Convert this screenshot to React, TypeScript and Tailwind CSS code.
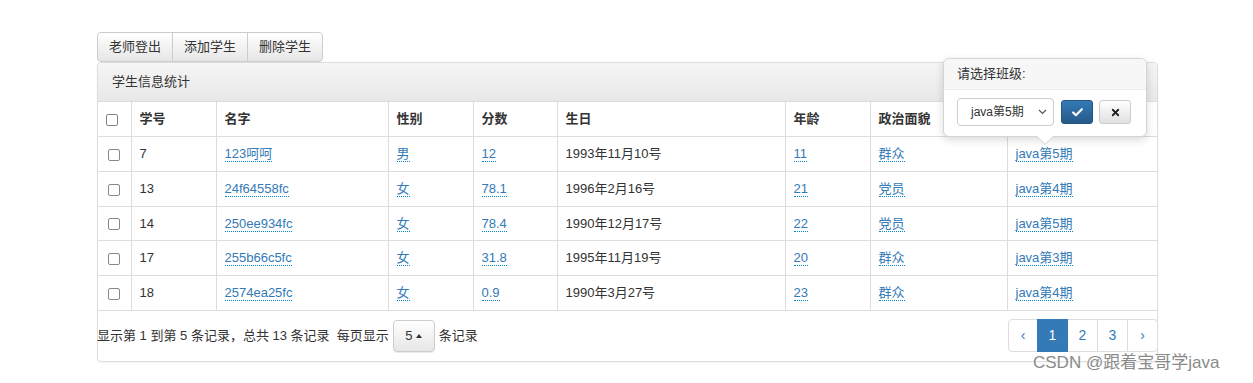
import { Check, X } from "lucide-react";

type Row = {
  id: string;
  name: string;
  sex: string;
  score: string;
  birth: string;
  age: string;
  party: string;
  cls: string;
};

const rows: Row[] = [
  { id: "7", name: "123呵呵", sex: "男", score: "12", birth: "1993年11月10号", age: "11", party: "群众", cls: "java第5期" },
  { id: "13", name: "24f64558fc", sex: "女", score: "78.1", birth: "1996年2月16号", age: "21", party: "党员", cls: "java第4期" },
  { id: "14", name: "250ee934fc", sex: "女", score: "78.4", birth: "1990年12月17号", age: "22", party: "党员", cls: "java第5期" },
  { id: "17", name: "255b66c5fc", sex: "女", score: "31.8", birth: "1995年11月19号", age: "20", party: "群众", cls: "java第3期" },
  { id: "18", name: "2574ea25fc", sex: "女", score: "0.9", birth: "1990年3月27号", age: "23", party: "群众", cls: "java第4期" },
];

const font = "font-['Liberation_Sans','Noto_Sans_CJK_SC',sans-serif]";

function Editable({ text }: { text: string }) {
  return (
    <span className="border-b border-dotted border-[#0088cc] text-[#337ab7]">{text}</span>
  );
}

function Box() {
  return <span className="inline-block h-[12px] w-[12px] rounded-[2px] border border-[#888] bg-white align-middle" />;
}

const th = "h-[34.7px] border border-[#ddd] px-2 text-left font-bold";
const td = "h-[34.7px] border border-[#ddd] px-2";

export default function App() {
  return (
    <div className={`${font} relative h-[383px] w-[1253px] bg-white text-[13px] text-[#333]`}>
      <div className="relative ml-[97px] w-[1061px] pt-[32px]">
        <div className="flex h-[30px] w-fit">
          {["老师登出", "添加学生", "删除学生"].map((b, i) => (
            <div
              key={b}
              className={`flex h-[30px] w-[76px] items-center justify-center border border-[#ccc] bg-gradient-to-b from-white to-[#e6e6e6] ${
                i === 0 ? "rounded-l-[4px]" : "-ml-px"
              } ${i === 2 ? "rounded-r-[4px]" : ""}`}
            >
              {b}
            </div>
          ))}
        </div>

        <div className="rounded-[4px] border border-[#ddd] shadow-[0_1px_2px_rgba(0,0,0,0.05)]">
          <div className="flex h-[39px] items-center rounded-t-[4px] border-b border-[#ddd] bg-gradient-to-b from-[#f5f5f5] to-[#e8e8e8] px-[14px]">
            学生信息统计
          </div>
          <table className="w-[1059px] table-fixed border-collapse">
            <colgroup>
              <col className="w-[33px]" />
              <col className="w-[85px]" />
              <col className="w-[172px]" />
              <col className="w-[85px]" />
              <col className="w-[84px]" />
              <col className="w-[228px]" />
              <col className="w-[85px]" />
              <col className="w-[137px]" />
              <col className="w-[150px]" />
            </colgroup>
            <thead>
              <tr>
                <th className={`${th} border-l-0 border-t-0 text-center`}>
                  <Box />
                </th>
                {["学号", "名字", "性别", "分数", "生日", "年龄", "政治面貌", ""].map((h, i) => (
                  <th key={i} className={`${th} border-t-0 ${i === 7 ? "border-r-0" : ""}`}>
                    {h}
                  </th>
                ))}
              </tr>
            </thead>
            <tbody>
              {rows.map((r) => (
                <tr key={r.id}>
                  <td className={`${td} border-l-0 text-center`}>
                    <Box />
                  </td>
                  <td className={td}>{r.id}</td>
                  <td className={td}>
                    <Editable text={r.name} />
                  </td>
                  <td className={td}>
                    <Editable text={r.sex} />
                  </td>
                  <td className={td}>
                    <Editable text={r.score} />
                  </td>
                  <td className={td}>{r.birth}</td>
                  <td className={td}>
                    <Editable text={r.age} />
                  </td>
                  <td className={td}>
                    <Editable text={r.party} />
                  </td>
                  <td className={`${td} border-r-0`}>
                    <Editable text={r.cls} />
                  </td>
                </tr>
              ))}
            </tbody>
          </table>
          <div className="-ml-px flex h-[50px] items-center justify-between pr-0">
            <div className="flex items-center">
              <span>显示第 1 到第 5 条记录，总共 13 条记录&nbsp;&nbsp;每页显示</span>
              <div className="ml-[4px] mr-[4px] flex h-[32px] w-[42px] items-center justify-center gap-[4px] rounded-[4px] border border-[#ccc] bg-gradient-to-b from-white to-[#e6e6e6] shadow-[0_1px_0_rgba(0,0,0,0.08)]">
                <span>5</span>
                <span className="h-0 w-0 border-x-[3px] border-b-[4px] border-x-transparent border-b-[#333]" />
              </div>
              <span>条记录</span>
            </div>
            <div className="-mr-px flex h-[33px] items-stretch">
              {["‹", "1", "2", "3", "›"].map((p, i) => (
                <div
                  key={p}
                  className={`flex items-center justify-center border text-[14px] ${
                    i === 0 ? "w-[30px] rounded-l-[4px]" : "-ml-px w-[31px]"
                  } ${i === 4 ? "rounded-r-[4px]" : ""} ${
                    i === 1 ? "z-10 border-[#337ab7] bg-[#337ab7] text-white" : "border-[#ddd] bg-white text-[#337ab7]"
                  }`}
                >
                  {p}
                </div>
              ))}
            </div>
          </div>
        </div>

        <div className="absolute left-[846px] top-[58px] z-20 w-[204px] rounded-[6px] border border-[#d4d4d4] bg-white shadow-[0_3px_8px_rgba(0,0,0,0.15)]">
          <div className="flex h-[31px] items-center rounded-t-[6px] border-b border-[#ebebeb] bg-[#f7f7f7] px-[13px] text-[13px]">
            请选择班级:
          </div>
          <div className="flex items-center gap-[7px] px-[13px] pb-[10px] pt-[8px]">
            <div className="flex h-[28px] w-[97px] items-center justify-between rounded-[4px] border border-[#ccc] bg-white pl-[13px] pr-[6px] text-[12px]">
              <span>java第5期</span>
              <svg width="9" height="6" viewBox="0 0 9 6" fill="none" stroke="#555" strokeWidth="1.2">
                <path d="M1 1l3.5 3.5L8 1" />
              </svg>
            </div>
            <div className="flex h-[24px] w-[32px] items-center justify-center rounded-[3px] border border-[#245580] bg-gradient-to-b from-[#337ab7] to-[#265a88]">
              <Check size={13} strokeWidth={4} color="white" />
            </div>
            <div className="ml-[-1px] flex h-[24px] w-[32px] items-center justify-center rounded-[3px] border border-[#ccc] bg-gradient-to-b from-white to-[#e0e0e0]">
              <X size={11} strokeWidth={4} color="#222" />
            </div>
          </div>
          <div className="absolute bottom-[-9px] left-[92px] h-0 w-0 border-x-[9px] border-t-[9px] border-x-transparent border-t-[#cfcfcf]" />
          <div className="absolute bottom-[-8px] left-[93px] h-0 w-0 border-x-[8px] border-t-[8px] border-x-transparent border-t-white" />
        </div>
      </div>

      <div className="absolute left-[1033px] top-[350px] text-[17px] text-[#8a8a8a] [text-shadow:0_0_2px_white]">
        CSDN @跟着宝哥学java
      </div>
    </div>
  );
}
